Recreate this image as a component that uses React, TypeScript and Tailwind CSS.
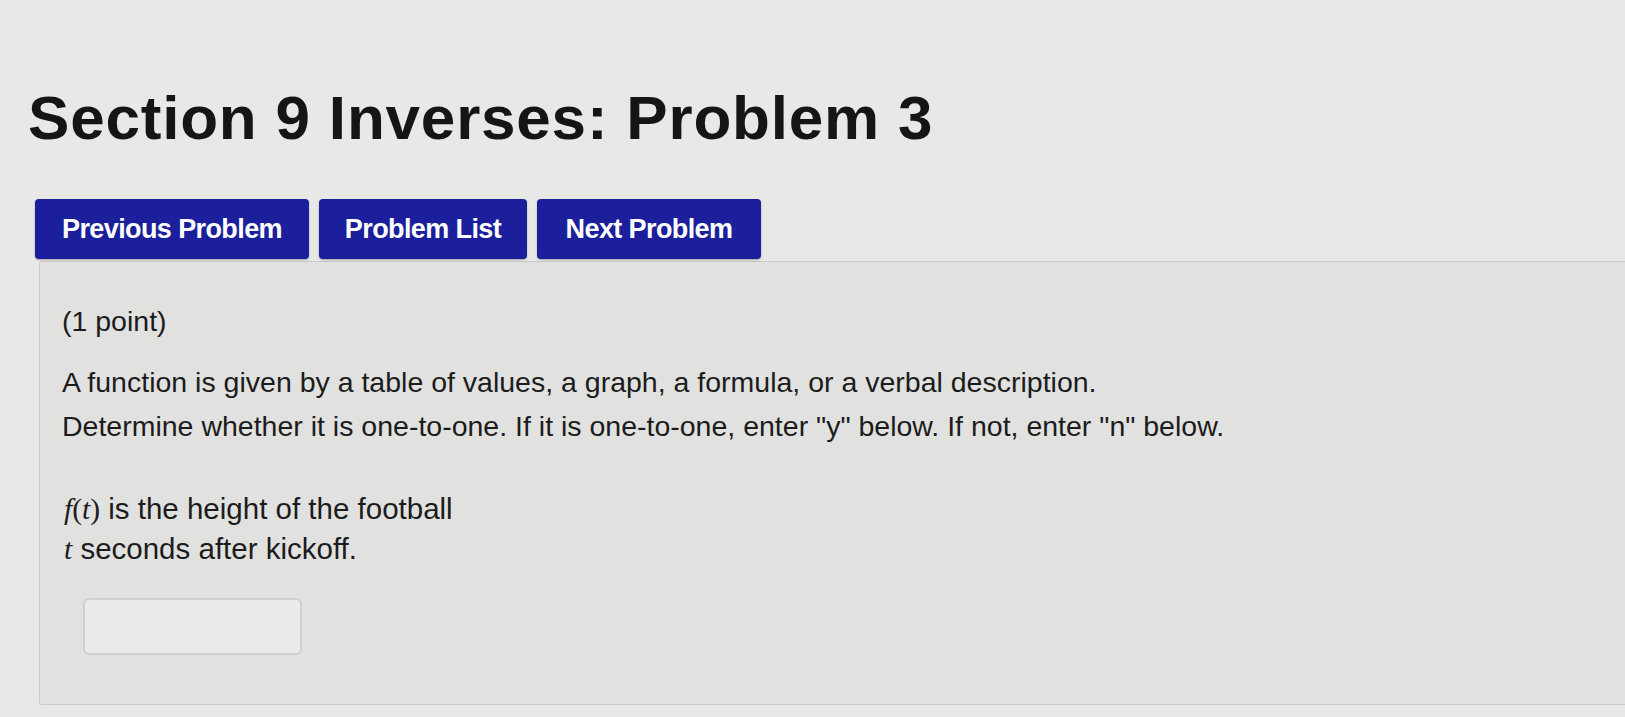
import React from 'react';

export default function App() {
  const buttons = [
    { label: 'Previous Problem', w: 'w-[274px]' },
    { label: 'Problem List', w: 'w-[208px]' },
    { label: 'Next Problem', w: 'w-[224px]' },
  ];

  return (
    <div className="w-[1625px] h-[717px] overflow-hidden bg-[#e8e9e7] text-[#1c1c1c] font-['Liberation_Sans',Arial,sans-serif]">
      <div className="pl-[28px] pt-[82px]">
        <h1 className="text-[62px] leading-[72px] font-bold tracking-[0.8px] text-[#151515]">Section 9 Inverses: Problem 3</h1>

        {/* Nav buttons */}
        <div className="mt-[45px] ml-[7px] flex gap-[10px]">
          {buttons.map((b) => (
            <button
              key={b.label}
              className={`${b.w} h-[60px] rounded-[4px] bg-[#1b1f9b] text-white text-[27px] font-bold tracking-[-0.6px] shadow-[0_1px_2px_rgba(0,0,0,0.3)]`}
            >
              {b.label}
            </button>
          ))}
        </div>
      </div>

      {/* Problem panel */}
      <div className="ml-[39px] mt-[2px] w-[1620px] h-[444px] bg-[#e1e2e0] border border-[#c9cac8] rounded-[3px] pl-[22px] pt-[37px] text-[28.5px] leading-[44px]">
        <p>(1 point)</p>
        <p className="mt-[17px]">
          A function is given by a table of values, a graph, a formula, or a verbal description.
          <br />
          Determine whether it is one-to-one. If it is one-to-one, enter "y" below. If not, enter "n" below.
        </p>
        <p className="mt-[41px] pl-[2px] text-[29.5px] leading-[40px]">
          <span className="font-['Liberation_Serif',serif] italic">f</span>
          <span className="font-['Liberation_Serif',serif]">(</span>
          <span className="font-['Liberation_Serif',serif] italic">t</span>
          <span className="font-['Liberation_Serif',serif]">)</span> is the height of the football
          <br />
          <span className="font-['Liberation_Serif',serif] italic">t</span> seconds after kickoff.
        </p>
        <div className="mt-[29px] ml-[21px] w-[219px] h-[57px] rounded-[6px] border-2 border-[#cfd0ce] bg-[#ebecea]" />
      </div>
    </div>
  );
}
